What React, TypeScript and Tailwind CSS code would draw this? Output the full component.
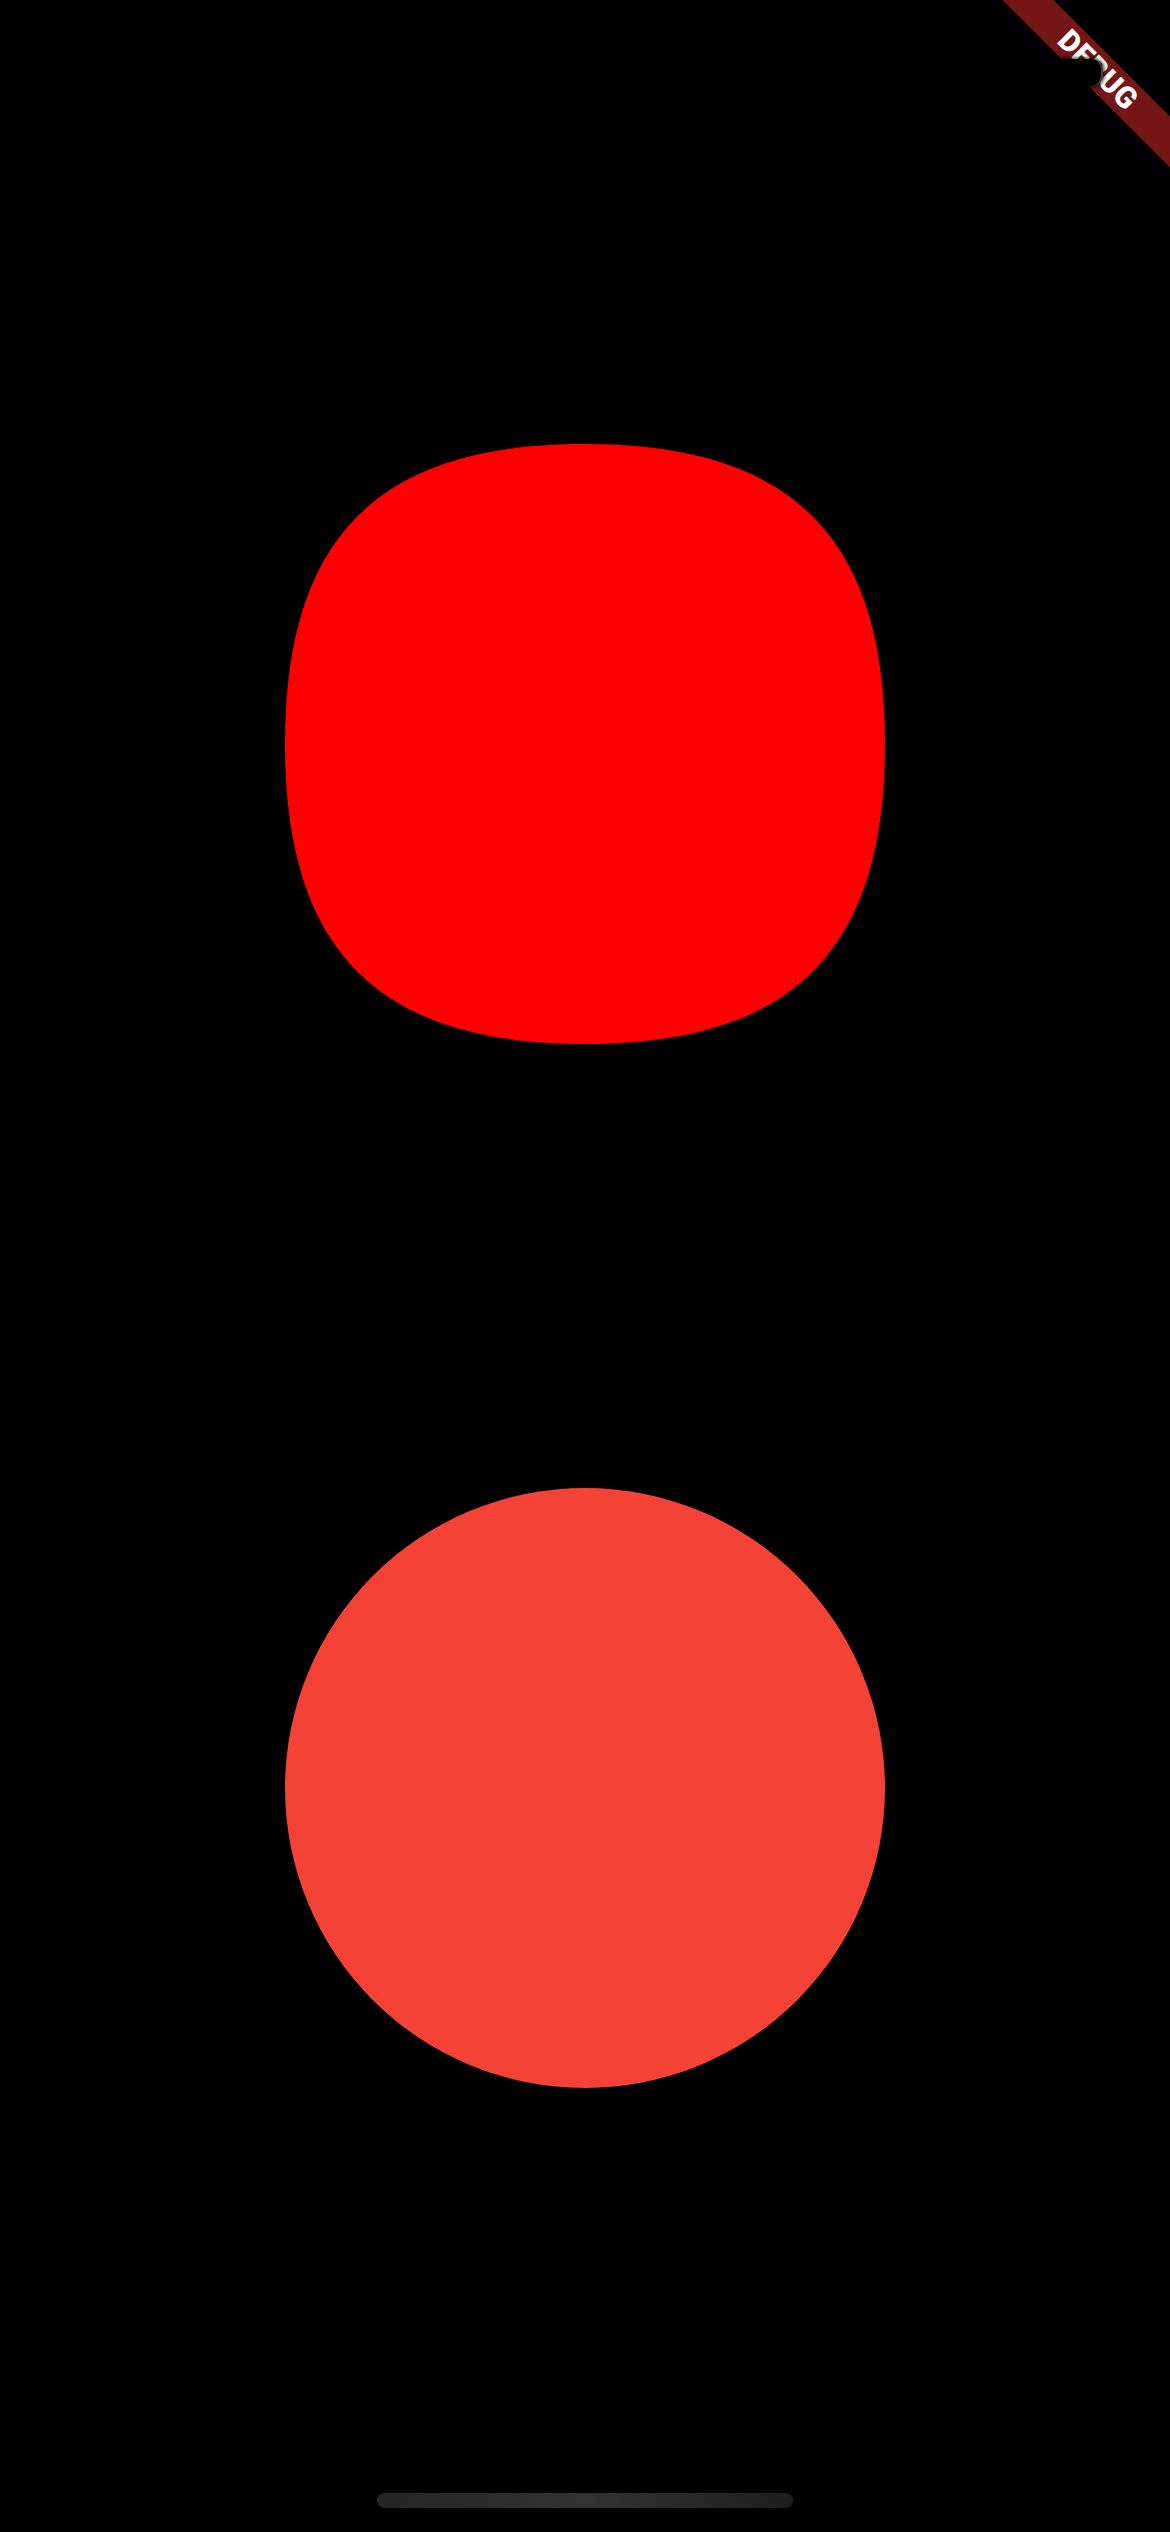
import React from 'react';

// rounded squircle made of four cubic curves (control at 0.69 of the half side)
function Squircle() {
  return (
    <svg width={600} height={600} viewBox="0 0 600 600" className="block">
      <path
        d="M300,0 C507,0 600,93 600,300 C600,507 507,600 300,600 C93,600 0,507 0,300 C0,93 93,0 300,0 Z"
        fill="#ff0000"
      />
    </svg>
  );
}

function DebugBanner() {
  return (
    <div className="pointer-events-none absolute inset-0 overflow-hidden">
      <div
        className="absolute left-[898px] top-[52px] flex h-[36px] w-[400px] rotate-45 items-center justify-center bg-[#751616] text-[30px] leading-none font-black tracking-[0.5px] text-white"
        style={{ fontFamily: 'Roboto, "Liberation Sans", sans-serif' }}
      >
        DEBUG
      </div>
      <div className="absolute left-[1059px] top-[59px] h-[27px] w-[44px] rounded-l-[4px] rounded-r-[11px] border-r-2 border-[#8a8a8a]/50 bg-black shadow-[0_0_3px_2px_rgba(0,0,0,0.55)]" />
    </div>
  );
}

export default function App() {
  return (
    <div className="relative flex h-[2532px] w-[1170px] flex-col items-center justify-evenly overflow-hidden bg-black">
      <Squircle />
      <div className="h-[600px] w-[600px] rounded-full bg-[#f44336]" />

      <DebugBanner />

      <div className="absolute bottom-[24px] left-[377px] h-[15px] w-[416px] rounded-full bg-gradient-to-r from-[#242424] via-[#333333] to-[#1e1e1e]" />
    </div>
  );
}
